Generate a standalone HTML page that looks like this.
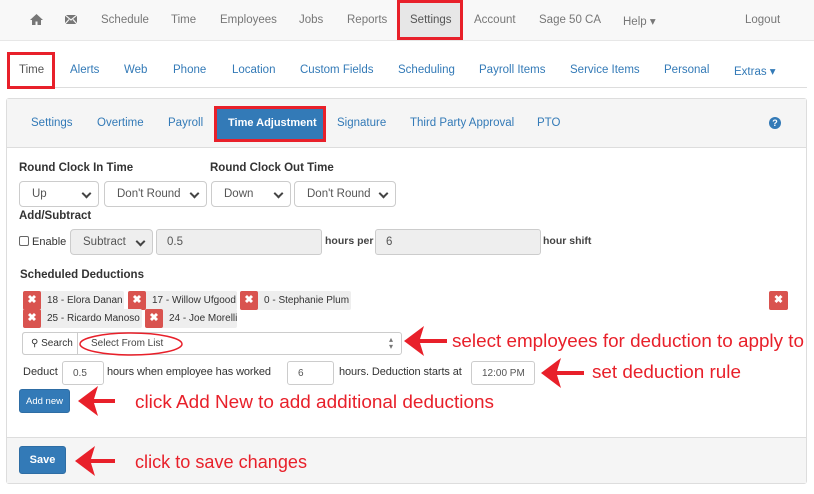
<!DOCTYPE html>
<html><head><meta charset="utf-8"><style>
*{box-sizing:border-box;margin:0;padding:0;white-space:nowrap}
body{width:814px;height:494px;background:#fff;font-family:"Liberation Sans",Arial,sans-serif;position:relative;overflow:hidden;color:#333}
.a{position:absolute}
.nav{position:absolute;left:0;top:0;width:814px;height:41px;background:#f8f8f8;border-bottom:1px solid #e7e7e7}
.n{position:absolute;top:14px;font-size:11.5px;color:#777}
.s{position:absolute;top:64px;font-size:11.5px;color:#337ab7}
.t{position:absolute;top:117px;font-size:11.5px;color:#337ab7}
.lbl{position:absolute;font-size:11.5px;font-weight:bold;color:#333}
.sel{position:absolute;height:26px;border:1px solid #ccc;border-radius:4px;background:#fff;font-size:11.5px;color:#555;padding:6px 0 0 12px}
.sel:after{content:"";position:absolute;right:8px;top:8px;width:5px;height:5px;border-right:2px solid #444;border-bottom:2px solid #444;transform:rotate(45deg)}
.inp{position:absolute;border:1px solid #ccc;border-radius:3px;background:#fff;font-size:10px;color:#555;padding-left:10px}
.gr{background:#eee}
.tag{position:absolute;height:19px;background:#eee;font-size:10px;color:#333;border-radius:2px}
.tag b{position:absolute;left:0;top:0;width:18px;height:19px;background:#d9534f;border-radius:2px;color:#fff;font-size:11px;text-align:center;line-height:19px}
.tag span{position:absolute;left:24px;top:4px}
.btn{position:absolute;background:#337ab7;color:#fff;border:1px solid #2e6da4;border-radius:3px;font-size:11px;text-align:center}
</style></head><body>
<div class="nav"></div>
<svg class="a" style="left:30px;top:14px" width="13" height="11" viewBox="0 0 13 11"><path d="M6.5 0L0 6h2v5h3.5V7.5h2V11H11V6h2z" fill="#777"/></svg>
<svg class="a" style="left:65px;top:15px" width="12" height="9" viewBox="0 0 12 9"><rect width="12" height="9" fill="#777"/><path d="M0 0l6 5 6-5M0 9l4-4.5M12 9l-4-4.5" stroke="#f8f8f8" stroke-width="1.2" fill="none"/></svg>
<div class="n" style="left:101px">Schedule</div>
<div class="n" style="left:171px">Time</div>
<div class="n" style="left:220px">Employees</div>
<div class="n" style="left:299px">Jobs</div>
<div class="n" style="left:347px">Reports</div>
<div class="a" style="left:397px;top:0;width:66px;height:40px;background:#e7e7e7;border:3px solid #e8202a"></div>
<div class="n" style="left:410px;color:#555">Settings</div>
<div class="n" style="left:474px">Account</div>
<div class="n" style="left:539px">Sage 50 CA</div>
<div class="n" style="left:623px">Help ▾</div>
<div class="n" style="left:745px">Logout</div>

<div class="a" style="left:7px;top:87px;width:800px;height:1px;background:#ddd"></div>
<div class="a" style="left:7px;top:52px;width:48px;height:37px;background:#fff;border:3px solid #e8202a"></div>
<div class="s" style="left:19px;color:#555">Time</div>
<div class="s" style="left:70px">Alerts</div>
<div class="s" style="left:124px">Web</div>
<div class="s" style="left:173px">Phone</div>
<div class="s" style="left:232px">Location</div>
<div class="s" style="left:300px">Custom Fields</div>
<div class="s" style="left:398px">Scheduling</div>
<div class="s" style="left:479px">Payroll Items</div>
<div class="s" style="left:570px">Service Items</div>
<div class="s" style="left:664px">Personal</div>
<div class="s" style="left:734px">Extras ▾</div>

<div class="a" style="left:6px;top:98px;width:801px;height:386px;border:1px solid #ddd;border-radius:3px"></div>
<div class="a" style="left:7px;top:99px;width:799px;height:49px;background:#f5f5f5;border-bottom:1px solid #ddd"></div>
<div class="t" style="left:31px">Settings</div>
<div class="t" style="left:97px">Overtime</div>
<div class="t" style="left:168px">Payroll</div>
<div class="a" style="left:214px;top:106px;width:112px;height:36px;background:#337ab7;border:3px solid #e8202a"></div>
<div class="t" style="left:228px;color:#fff;font-weight:bold;font-size:11px">Time Adjustment</div>
<div class="t" style="left:337px">Signature</div>
<div class="t" style="left:410px">Third Party Approval</div>
<div class="t" style="left:537px">PTO</div>
<div class="a" style="left:769px;top:117px;width:12px;height:12px;border-radius:50%;background:#337ab7;color:#fff;font-size:9px;font-weight:bold;text-align:center;line-height:12px">?</div>

<div class="lbl" style="left:19px;top:162px">Round Clock In Time</div>
<div class="lbl" style="left:210px;top:162px">Round Clock Out Time</div>
<div class="sel" style="left:19px;top:181px;width:80px">Up</div>
<div class="sel" style="left:104px;top:181px;width:103px">Don't Round</div>
<div class="sel" style="left:211px;top:181px;width:80px">Down</div>
<div class="sel" style="left:294px;top:181px;width:102px">Don't Round</div>
<div class="lbl" style="left:19px;top:210px">Add/Subtract</div>
<div class="a" style="left:19px;top:236px;width:10px;height:10px;border:1px solid #666;border-radius:2px;background:#fff"></div>
<div class="a" style="left:32px;top:236px;font-size:11px">Enable</div>
<div class="sel gr" style="left:70px;top:229px;width:83px;height:26px">Subtract</div>
<div class="inp gr" style="left:156px;top:229px;width:166px;height:26px;font-size:11.5px;padding-top:6px">0.5</div>
<div class="a" style="left:325px;top:235px;font-size:10.5px;font-weight:bold;color:#444">hours per</div>
<div class="inp gr" style="left:375px;top:229px;width:166px;height:26px;font-size:11.5px;padding-top:6px">6</div>
<div class="a" style="left:543px;top:235px;font-size:10.5px;font-weight:bold;color:#444">hour shift</div>

<div class="lbl" style="left:20px;top:269px">Scheduled Deductions</div>
<div class="tag" style="left:23px;top:291px;width:101px"><b>✖</b><span>18 - Elora Danan</span></div>
<div class="tag" style="left:128px;top:291px;width:109px"><b>✖</b><span>17 - Willow Ufgood</span></div>
<div class="tag" style="left:240px;top:291px;width:111px"><b>✖</b><span>0 - Stephanie Plum</span></div>
<div class="tag" style="left:23px;top:309px;width:119px"><b>✖</b><span>25 - Ricardo Manoso</span></div>
<div class="tag" style="left:145px;top:309px;width:92px"><b>✖</b><span>24 - Joe Morelli</span></div>
<div class="tag" style="left:769px;top:291px;width:19px"><b style="width:19px">✖</b></div>

<div class="a" style="left:22px;top:332px;width:380px;height:23px;border:1px solid #ccc;border-radius:3px"></div>
<div class="a" style="left:22px;top:332px;width:56px;height:23px;border:1px solid #ccc;border-radius:3px 0 0 3px;font-size:10px;padding:5px 0 0 8px">⚲ Search</div>
<div class="a" style="left:91px;top:338px;font-size:10px;color:#444">Select From List</div>
<div class="a" style="left:389px;top:336px;font-size:8px;color:#777;line-height:7px;white-space:normal">▴<br>▾</div>
<svg class="a" style="left:78px;top:331px" width="108" height="26"><ellipse cx="53" cy="13" rx="51" ry="11" fill="none" stroke="#e8202a" stroke-width="1.5"/></svg>

<div class="a" style="left:23px;top:366px;font-size:11px">Deduct</div>
<div class="inp" style="left:62px;top:361px;width:42px;height:24px;padding-top:6px">0.5</div>
<div class="a" style="left:107px;top:366px;font-size:11px;letter-spacing:-0.1px">hours when employee has worked</div>
<div class="inp" style="left:287px;top:361px;width:47px;height:24px;padding-top:6px">6</div>
<div class="a" style="left:339px;top:366px;font-size:11px;letter-spacing:-0.1px">hours. Deduction starts at</div>
<div class="inp" style="left:471px;top:361px;width:64px;height:24px;padding-top:6px">12:00 PM</div>
<div class="btn" style="left:19px;top:389px;width:51px;height:24px;padding-top:6px;font-size:9.5px">Add new</div>

<div class="a" style="left:7px;top:437px;width:799px;height:46px;background:#f5f5f5;border-top:1px solid #ddd"></div>
<div class="btn" style="left:19px;top:446px;width:47px;height:28px;padding-top:7px;font-size:11px;font-weight:bold">Save</div>

<svg class="a" style="left:0;top:0" width="814" height="494">
<g fill="#e8202a">
<path d="M404 341l20-15-4 13h27v4h-27l4 13z"/>
<path d="M541 373l20-15-4 13h27v4h-27l4 13z"/>
<path d="M78 401l20-15-4 13h21v4h-21l4 13z"/>
<path d="M75 461l20-15-4 13h24v4h-24l4 13z"/>
</g>
<g fill="#e8202a" font-family="Liberation Sans, sans-serif" font-size="18">
<text x="452" y="347" textLength="352" lengthAdjust="spacingAndGlyphs">select employees for deduction to apply to</text>
<text x="592" y="378" textLength="149" lengthAdjust="spacingAndGlyphs">set deduction rule</text>
<text x="135" y="408" textLength="359" lengthAdjust="spacingAndGlyphs">click Add New to add additional deductions</text>
<text x="135" y="468" textLength="172" lengthAdjust="spacingAndGlyphs">click to save changes</text>
</g>
</svg>
</body></html>
